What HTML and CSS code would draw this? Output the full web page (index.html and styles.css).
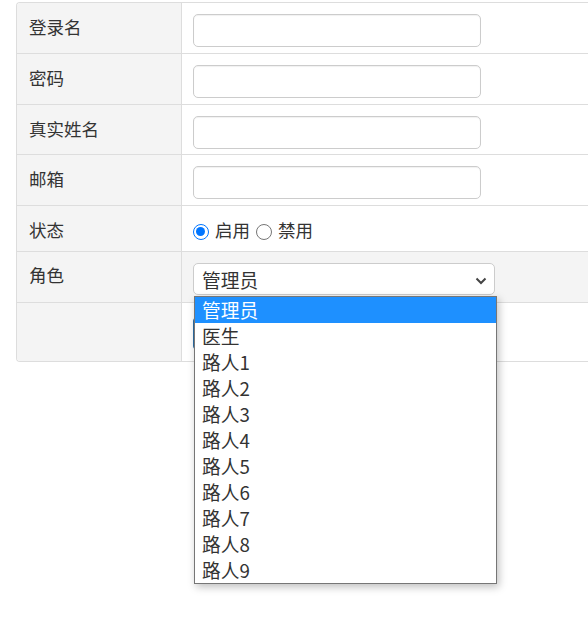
FILE: index.html
```html
<!DOCTYPE html>
<html lang="zh">
<head>
<meta charset="utf-8">
<title>用户编辑</title>
<link rel="stylesheet" href="styles.css">
</head>
<body>
<div class="form">
  <div class="row r1">
    <div class="label">登录名</div>
    <div class="value"><input class="text" type="text"></div>
  </div>
  <div class="row r2">
    <div class="label">密码</div>
    <div class="value"><input class="text" type="password"></div>
  </div>
  <div class="row r3">
    <div class="label">真实姓名</div>
    <div class="value"><input class="text" type="text"></div>
  </div>
  <div class="row r4">
    <div class="label">邮箱</div>
    <div class="value"><input class="text" type="text"></div>
  </div>
  <div class="row r5">
    <div class="label">状态</div>
    <div class="value radios">
      <label class="opt"><span class="radio on"></span>启用</label>
      <label class="opt"><span class="radio"></span>禁用</label>
    </div>
  </div>
  <div class="row r6">
    <div class="label">角色</div>
    <div class="value gray">
      <div class="select">
        <span>管理员</span>
        <svg class="chev" width="12" height="8" viewBox="0 0 12 8"><path d="M1.5 1.5 L6 6 L10.5 1.5" fill="none" stroke="#444" stroke-width="2"/></svg>
        <ul class="popup">
          <li class="sel">管理员</li>
          <li>医生</li>
          <li>路人1</li>
          <li>路人2</li>
          <li>路人3</li>
          <li>路人4</li>
          <li>路人5</li>
          <li>路人6</li>
          <li>路人7</li>
          <li>路人8</li>
          <li>路人9</li>
        </ul>
      </div>
    </div>
  </div>
  <div class="row r7">
    <div class="label"></div>
    <div class="value"><button class="btn" type="submit"></button></div>
  </div>
</div>
</body>
</html>
```

FILE: styles.css
```css
html, body {
  margin: 0;
  padding: 0;
  overflow: hidden;
  background: #fff;
}
body {
  font-family: "Noto Sans CJK SC", "Liberation Sans", sans-serif;
  color: #333;
  width: 588px;
  height: 629px;
}
.form {
  margin: 2px 0 0 16px;
  width: 572px;
  border: 1px solid #ddd;
  border-right: none;
  border-radius: 4px 0 0 4px;
  box-sizing: border-box;
}
.row {
  display: flex;
  border-top: 1px solid #ddd;
}
.row.r1 { border-top: none; }
.r1 { height: 50px; }
.r2 { height: 50px; }
.r3 { height: 49px; }
.r4 { height: 50px; }
.r5 { height: 45px; }
.r6 { height: 50px; }
.r7 { height: 58px; }
.label {
  flex: none;
  width: 165px;
  box-sizing: border-box;
  background: #f4f4f4;
  border-right: 1px solid #ddd;
  padding: 12px 0 0 12px;
  font-size: 17.5px;
  line-height: 24px;
  color: #333;
}
.r1 .label { border-top-left-radius: 3px; }
.r7 .label { border-bottom-left-radius: 3px; }
.r6 .label { padding-top: 11px; }
.value {
  flex: 1;
  padding-left: 11px;
  position: relative;
}
.value.gray { background: #f4f4f4; }
.text {
  display: block;
  margin: 11px 0 0 0;
  width: 288px;
  height: 33px;
  box-sizing: border-box;
  border: 1px solid #ccc;
  border-radius: 5px;
  background: #fff;
  box-shadow: inset 0 1px 1px rgba(0,0,0,.06);
  padding: 0 8px;
  font: inherit;
  outline: none;
}
.radios {
  display: flex;
  align-items: center;
  gap: 6px;
  padding-top: 3px;
  box-sizing: border-box;
}
.opt {
  display: flex;
  align-items: center;
  font-size: 17.5px;
  line-height: 24px;
  color: #333;
}
.radio {
  width: 16px;
  height: 16px;
  box-sizing: border-box;
  border: 1.5px solid #767676;
  border-radius: 50%;
  margin-right: 6px;
  margin-top: 3px;
  background: #fff;
  position: relative;
}
.radio.on {
  border: 1.5px solid #0075ff;
}
.radio.on::after {
  content: "";
  position: absolute;
  left: 2px;
  top: 2px;
  width: 9px;
  height: 9px;
  border-radius: 50%;
  background: #0075ff;
}
.select {
  position: relative;
  margin-top: 11px;
  width: 302px;
  height: 32px;
  box-sizing: border-box;
  border: 1px solid #ccc;
  border-radius: 5px;
  background: #fff;
  display: flex;
  align-items: center;
  padding: 0 8px;
  font-size: 18.75px;
  color: #333;
}
.chev {
  position: absolute;
  right: 7px;
  top: 13px;
}
.popup {
  position: absolute;
  left: 0;
  top: 32px;
  width: 303px;
  margin: 0;
  padding: 0;
  list-style: none;
  background: #fff;
  border: 1px solid #767676;
  box-sizing: border-box;
  box-shadow: 2px 3px 8px rgba(0,0,0,.25);
  z-index: 5;
}
.popup li {
  height: 26px;
  line-height: 26px;
  padding-left: 7px;
  font-size: 18.75px;
  color: #333;
}
.popup li.sel {
  background: #1e90ff;
  color: #fff;
}
.btn {
  display: block;
  margin-top: 14px;
  width: 60px;
  height: 33px;
  padding: 0;
  background: #337ab7;
  border: 1px solid #2e6da4;
  border-radius: 4px;
}
```
